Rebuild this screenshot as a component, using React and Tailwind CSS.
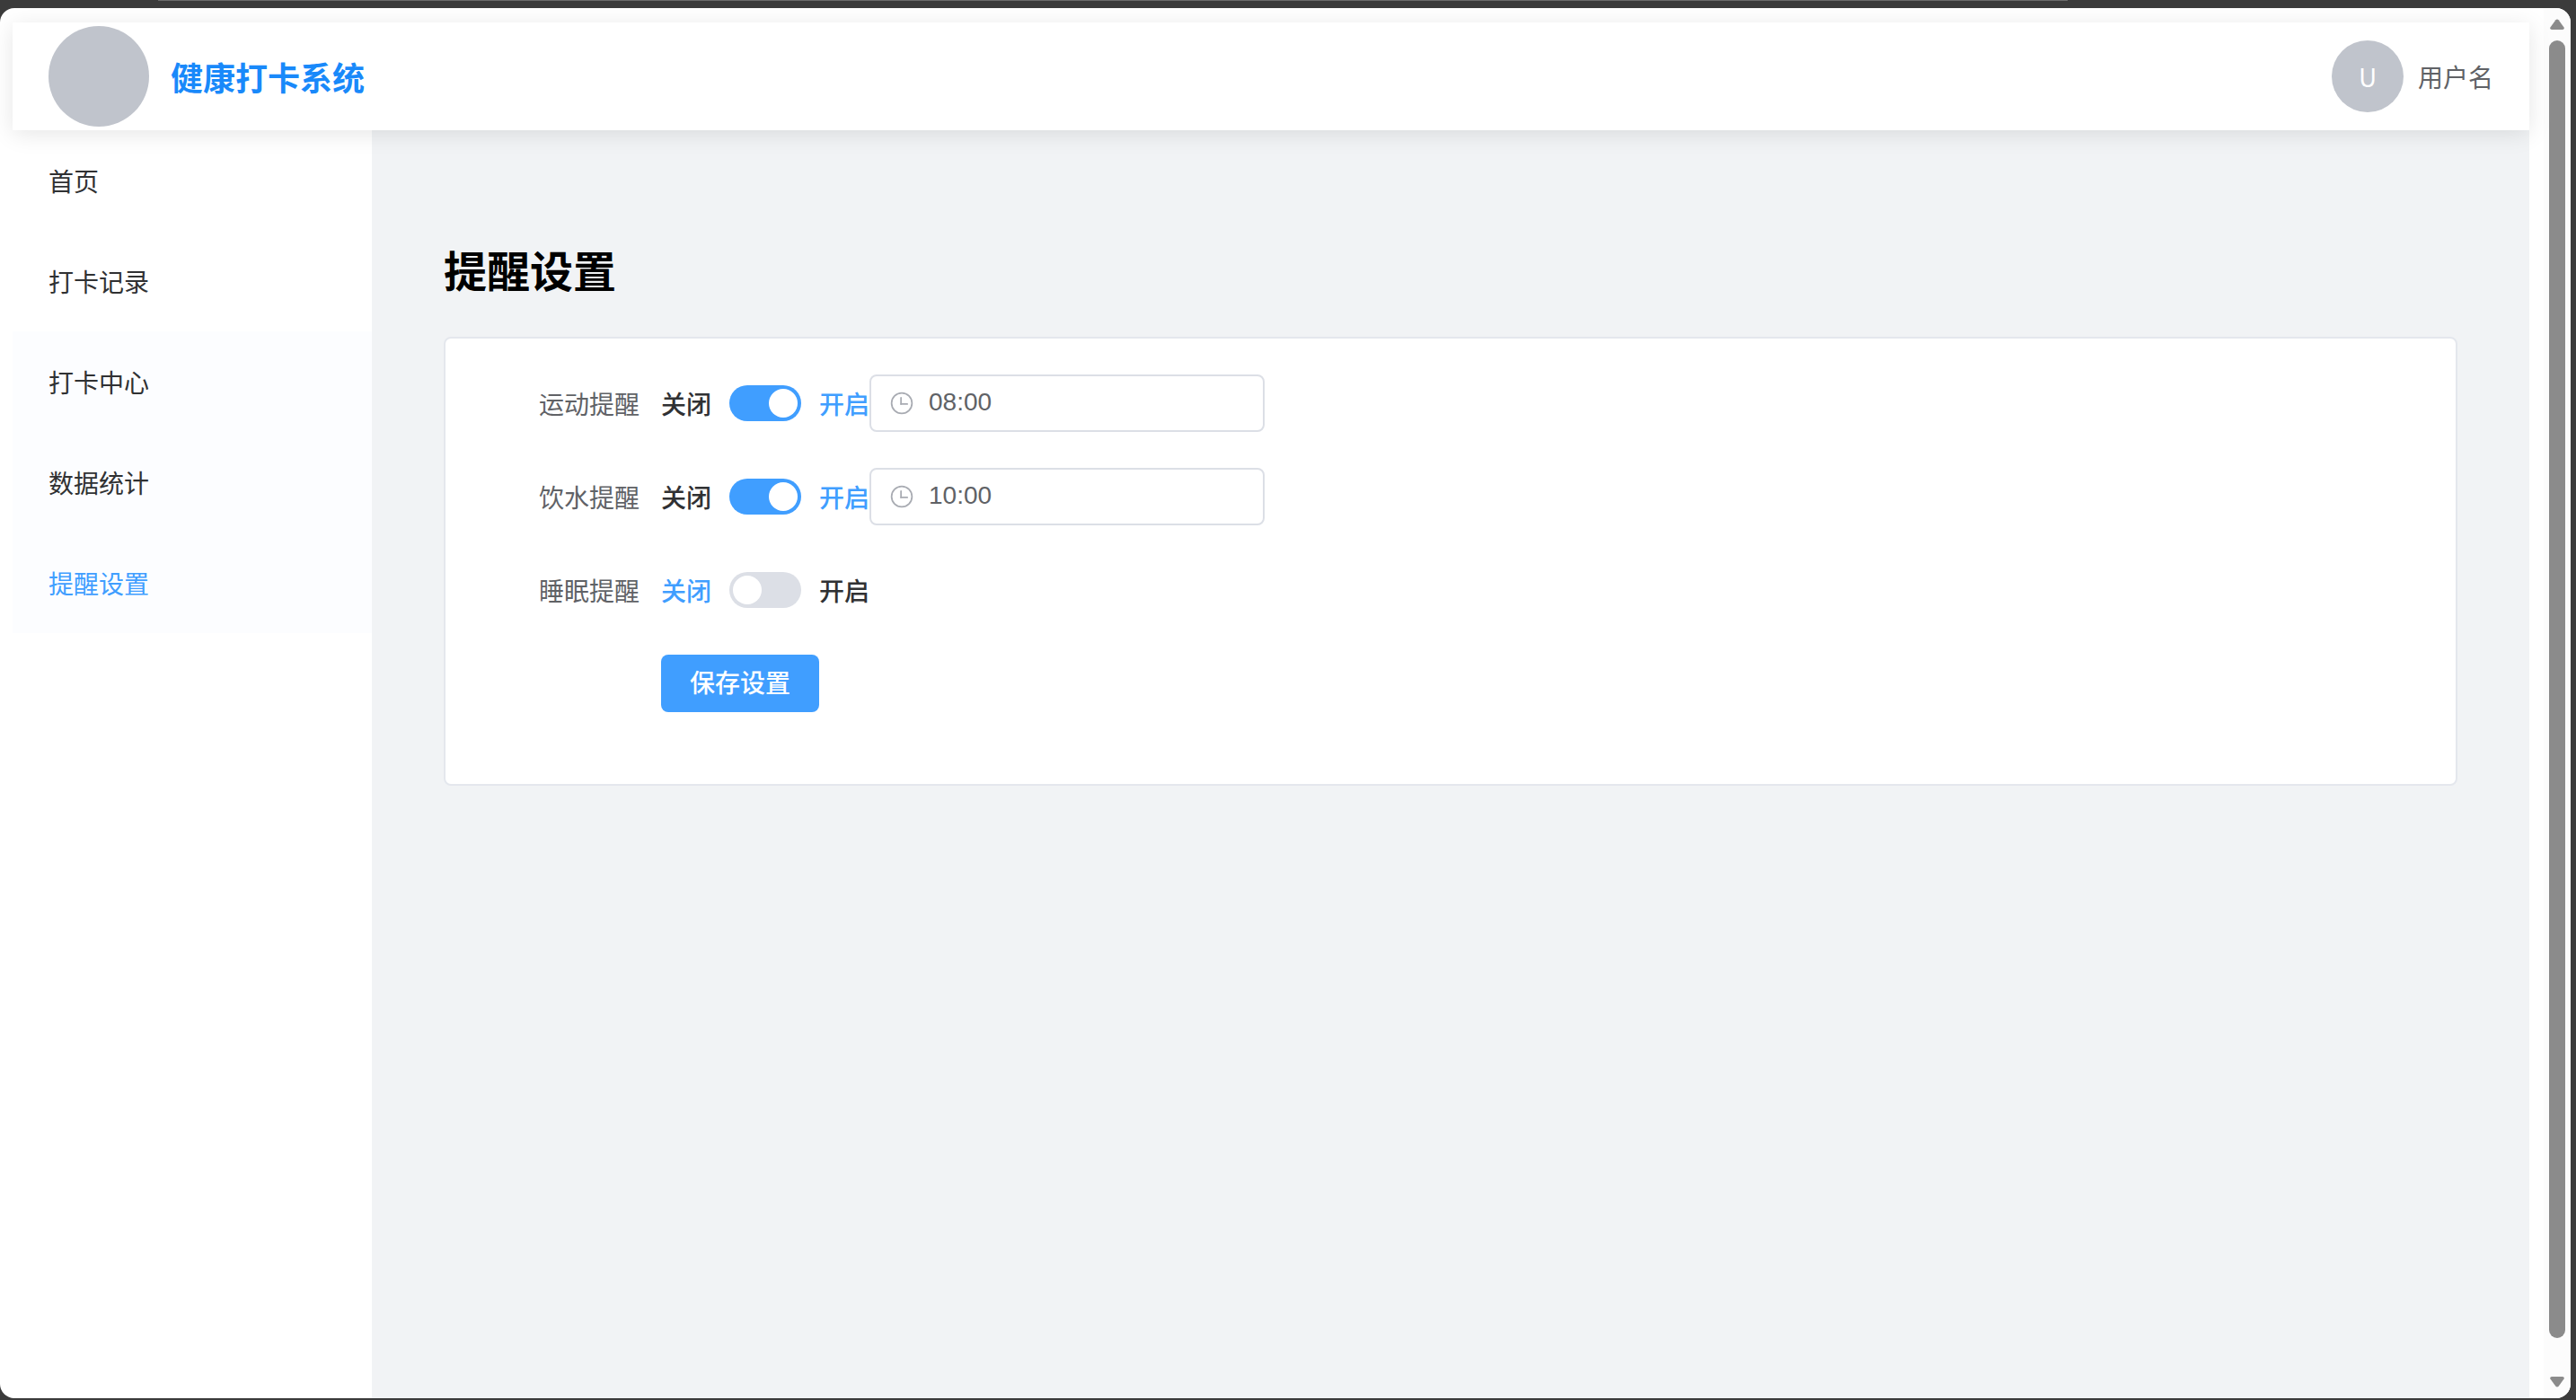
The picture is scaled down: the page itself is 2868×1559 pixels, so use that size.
import React, { useState } from 'react';

const menuItems = [
  { name: '首页' },
  { name: '打卡记录' },
  { name: '打卡中心', tinted: true },
  { name: '数据统计', tinted: true },
  { name: '提醒设置', tinted: true, active: true },
];

const initialReminders = [
  { id: 'exercise', label: '运动提醒', enabled: true, time: '08:00' },
  { id: 'water', label: '饮水提醒', enabled: true, time: '10:00' },
  { id: 'sleep', label: '睡眠提醒', enabled: false, time: '22:00' },
];

function ClockIcon() {
  return (
    <svg viewBox="0 0 1024 1024" className="h-7 w-7 shrink-0 fill-[#a8abb2]" aria-hidden="true">
      <path d="M512 896a384 384 0 1 0 0-768 384 384 0 0 0 0 768zm0 64a448 448 0 1 1 0-896 448 448 0 0 1 0 896z" />
      <path d="M480 256a32 32 0 0 1 32 32v256a32 32 0 0 1-64 0V288a32 32 0 0 1 32-32z" />
      <path d="M480 512h256q32 0 32 32t-32 32H480q-32 0-32-32t32-32z" />
    </svg>
  );
}

function Header() {
  return (
    <header className="relative z-10 flex h-[120px] items-center justify-between bg-white px-10 shadow-[0_4px_24px_rgba(0,0,0,0.1)]">
      <div className="flex items-center gap-6">
        <div className="h-28 w-28 rounded-full bg-[#c0c4cc]" />
        <span className="text-[36px] leading-[48px] font-bold text-[#1989fa]">健康打卡系统</span>
      </div>
      <div className="flex items-center gap-4">
        <div className="flex h-20 w-20 items-center justify-center rounded-full bg-[#c0c4cc] text-[28px] text-white">
          U
        </div>
        <span className="text-[28px] leading-10 text-[#606266]">用户名</span>
      </div>
    </header>
  );
}

function Sidebar() {
  return (
    <nav className="w-[400px] shrink-0 bg-white">
      <ul>
        {menuItems.map((item) => (
          <li key={item.name} className={item.tinted ? 'bg-[#fcfdff]' : ''}>
            <a
              href="#"
              className={`block px-10 text-[28px] leading-[112px] ${item.active ? 'text-[#409eff]' : 'text-[#303133]'}`}
            >
              {item.name}
            </a>
          </li>
        ))}
      </ul>
    </nav>
  );
}

function ReminderRow({ reminder, onToggle, onTimeChange }) {
  const { id, label, enabled, time } = reminder;

  return (
    <div className="mb-10 flex h-16 items-center">
      <label htmlFor={id} className="w-[200px] shrink-0 pr-6 text-right text-[28px] leading-[64px] text-[#606266]">
        {label}
      </label>
      <span className={`text-[28px] leading-10 font-medium ${enabled ? 'text-[#303133]' : 'text-[#409eff]'}`}>关闭</span>
      <input
        id={id}
        type="checkbox"
        role="switch"
        checked={enabled}
        onChange={() => onToggle(id)}
        className="mx-5 h-10 w-20 shrink-0 cursor-pointer appearance-none rounded-full bg-[#dcdfe6] p-1 transition before:block before:h-8 before:w-8 before:rounded-full before:bg-white before:content-[''] checked:bg-[#409eff] checked:before:ml-auto"
      />
      <span className={`text-[28px] leading-10 font-medium ${enabled ? 'text-[#409eff]' : 'text-[#303133]'}`}>开启</span>
      {enabled && (
        <div className="flex h-16 w-[440px] items-center gap-4 rounded-lg border-2 border-[#dcdfe6] bg-white px-5">
          <ClockIcon />
          <input
            type="text"
            aria-label={`${label}时间`}
            value={time}
            onChange={(e) => onTimeChange(id, e.target.value)}
            className="w-full min-w-0 pb-0.5 font-['Liberation_Sans',sans-serif] text-[28px] leading-10 text-[#606266] outline-none"
          />
        </div>
      )}
    </div>
  );
}

function Scrollbar() {
  return (
    <div className="flex w-[30px] shrink-0 flex-col items-center bg-[#fcfcfc] pt-3 pb-3" aria-hidden="true">
      <svg viewBox="0 0 16 12" className="h-3 w-4 fill-[#8b8b8b]">
        <path d="M6.4 1.2Q8-.4 9.6 1.2L15.6 9.6Q16.4 11.8 14 12H2Q-.4 11.8.4 9.6Z" />
      </svg>
      <div className="mt-3 mb-[43px] w-[18px] flex-1 rounded-full bg-[#8b8b8b]" />
      <svg viewBox="0 0 16 12" className="h-3 w-4 fill-[#8b8b8b]">
        <path d="M6.4 10.8Q8 12.4 9.6 10.8L15.6 2.4Q16.4.2 14 0H2Q-.4.2.4 2.4Z" />
      </svg>
    </div>
  );
}

export default function App() {
  const [reminders, setReminders] = useState(initialReminders);

  const handleToggle = (id) => {
    setReminders(reminders.map((r) => (r.id === id ? { ...r, enabled: !r.enabled } : r)));
  };

  const handleTimeChange = (id, time) => {
    setReminders(reminders.map((r) => (r.id === id ? { ...r, time } : r)));
  };

  return (
    <div className="flex min-h-screen flex-col bg-[#3b3b3b] pr-1.5 pb-0.5 font-['Noto_Sans_CJK_SC',sans-serif]">
      <div className="h-[9px]">
        <div className="mr-[560px] ml-44 h-px bg-[#6b6b6b]" />
      </div>
      <div className="flex flex-1 overflow-hidden rounded-2xl bg-white">
        <div className="flex min-w-0 flex-1 flex-col pt-4 pr-4 pl-3.5">
          <Header />
          <div className="flex flex-1">
            <Sidebar />
            <main className="min-w-0 flex-1 bg-[#f1f3f5] px-20 pt-[122px]">
              <h1 className="text-[48px] leading-[64px] font-bold text-black">提醒设置</h1>
              <form
                onSubmit={(e) => e.preventDefault()}
                className="mt-11 rounded-lg border-2 border-[#e4e7ed] bg-white p-10"
              >
                {reminders.map((r) => (
                  <ReminderRow key={r.id} reminder={r} onToggle={handleToggle} onTimeChange={handleTimeChange} />
                ))}
                <div className="mb-10 flex pl-[200px]">
                  <button
                    type="submit"
                    className="h-16 rounded-lg bg-[#409eff] px-8 pb-1 text-[28px] leading-10 font-medium text-white transition hover:bg-[#79bbff]"
                  >
                    保存设置
                  </button>
                </div>
              </form>
            </main>
          </div>
        </div>
        <Scrollbar />
      </div>
    </div>
  );
}
